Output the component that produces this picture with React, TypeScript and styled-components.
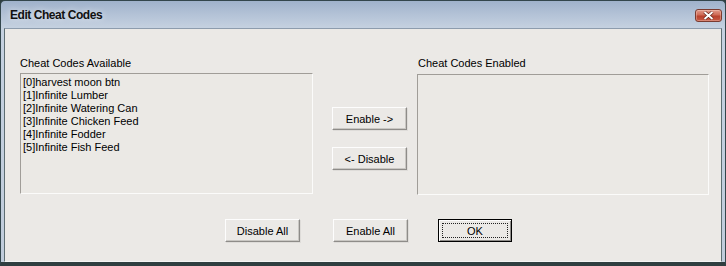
import React from "react";
import styled, { createGlobalStyle } from "styled-components";

const Global = createGlobalStyle`
  html, body { margin: 0; padding: 0; background: #2f3e40; }
  body { font-family: "Liberation Sans", Arial, sans-serif; }
  * { box-sizing: border-box; }
`;

const Window = styled.div`
  width: 726px;
  height: 266px;
  display: flex;
  flex-direction: column;
  border: 1px solid #33464c;
  border-bottom: 4px solid #2f3e40;
  border-radius: 5px 5px 0 0;
  background: linear-gradient(180deg, #9fb2cb 0px, #b4c3d7 14px, #c5d1e0 27px, #c0ccdb 100%);
  padding: 0 3px 0 3px;
  overflow: hidden;
`;

const TitleBar = styled.div`
  height: 27px;
  flex: none;
  display: flex;
  align-items: center;
  padding-left: 6px;
`;

const Title = styled.div`
  font-family: "Liberation Sans", Arial, sans-serif;
  font-weight: bold;
  font-size: 12px;
  color: #111;
  text-shadow: 0 0 6px rgba(255, 255, 255, 0.7);
  letter-spacing: -0.45px;
`;

const CloseButton = styled.div`
  margin-left: auto;
  margin-right: 0px;
  margin-top: 1px;
  width: 27px;
  height: 13px;
  border: 1px solid #7a3b30;
  border-radius: 3px;
  background: linear-gradient(180deg, #e19a8a 0%, #cf6a55 45%, #b8412d 55%, #c65a44 100%);
  display: flex;
  align-items: center;
  justify-content: center;
  box-shadow: inset 0 0 0 1px rgba(255, 220, 210, 0.35);
`;

const Client = styled.div`
  flex: 1;
  background: #ebe9e6;
  border-left: 1px solid #5d6d72;
  border-top: 1px solid #8d9cad;
  border-right: 1px solid #5d6d72;
  border-bottom: 1px solid #f4f4f4;
  padding: 28px 0 0 15px;
  font-size: 11px;
  color: #000;
`;

const TopRow = styled.div`
  display: flex;
  align-items: flex-start;
`;

const Panel = styled.div<{ $width: number; $offset: number }>`
  width: ${(p) => p.$width}px;
  margin-left: ${(p) => p.$offset}px;
  display: flex;
  flex-direction: column;
`;

const Label = styled.div<{ $indent?: number }>`
  height: 13px;
  line-height: 13px;
  padding-left: ${(p) => p.$indent ?? 0}px;
  margin-bottom: 3px;
  white-space: nowrap;
`;

const ListBox = styled.div<{ $top?: number }>`
  height: 121px;
  margin-top: ${(p) => p.$top ?? 0}px;
  border-top: 1px solid #a09d98;
  border-left: 1px solid #a09d98;
  border-right: 1px solid #fbfbfa;
  border-bottom: 1px solid #fbfbfa;
  background: #ebe9e5;
  padding: 2px 2px;
`;

const Item = styled.div`
  height: 13px;
  line-height: 13px;
  white-space: nowrap;
`;

const MiddleColumn = styled.div`
  width: 75px;
  margin-left: 19px;
  padding-top: 50px;
  display: flex;
  flex-direction: column;
  gap: 17px;
`;

const Button = styled.div<{ $default?: boolean; $width?: number }>`
  width: ${(p) => p.$width ?? 75}px;
  height: 23px;
  display: flex;
  align-items: center;
  justify-content: center;
  background: #ebe9e6;
  font-size: 11px;
  color: #000;
  border: 1px solid;
  border-color: ${(p) => (p.$default ? "#000" : "#fdfdfd #8e8c89 #8e8c89 #fdfdfd")};
  box-shadow: ${(p) =>
    p.$default
      ? "inset 1px 1px 0 #fdfdfd, inset -1px -1px 0 #8e8c89"
      : "inset -1px -1px 0 #c9c7c3, 1px 1px 0 #dedcd9"};
  padding: 3px;
`;

const Focus = styled.div`
  width: 100%;
  height: 100%;
  border: 1px dotted #222;
  display: flex;
  align-items: center;
  justify-content: center;
`;

const BottomRow = styled.div`
  display: flex;
  margin-top: 24px;
  padding-left: 205px;
`;

const Spacer = styled.div<{ $w: number }>`
  width: ${(p) => p.$w}px;
  flex: none;
`;

const items = [
  "[0]harvest moon btn",
  "[1]Infinite Lumber",
  "[2]Infinite Watering Can",
  "[3]Infinite Chicken Feed",
  "[4]Infinite Fodder",
  "[5]Infinite Fish Feed",
];

export default function App() {
  return (
    <>
      <Global />
      <Window>
        <TitleBar>
          <Title>Edit Cheat Codes</Title>
          <CloseButton>
            <svg width="11" height="9" viewBox="0 0 11 9">
              <path d="M1.5 1 L9.5 8 M9.5 1 L1.5 8" stroke="#5a1e14" strokeWidth="3.2" strokeLinecap="butt" />
              <path d="M1.5 1 L9.5 8 M9.5 1 L1.5 8" stroke="#ffffff" strokeWidth="2" strokeLinecap="butt" />
            </svg>
          </CloseButton>
        </TitleBar>
        <Client>
          <TopRow>
            <Panel $width={293} $offset={0}>
              <Label>Cheat Codes Available</Label>
              <ListBox>
                {items.map((t) => (
                  <Item key={t}>{t}</Item>
                ))}
              </ListBox>
            </Panel>
            <MiddleColumn>
              <Button>Enable -&gt;</Button>
              <Button>&lt;- Disable</Button>
            </MiddleColumn>
            <Panel $width={292} $offset={10}>
              <Label $indent={1}>Cheat Codes Enabled</Label>
              <ListBox $top={1} />
            </Panel>
          </TopRow>
          <BottomRow>
            <Button>Disable All</Button>
            <Spacer $w={33} />
            <Button>Enable All</Button>
            <Spacer $w={30} />
            <Button $default $width={74}>
              <Focus>OK</Focus>
            </Button>
          </BottomRow>
        </Client>
      </Window>
    </>
  );
}
